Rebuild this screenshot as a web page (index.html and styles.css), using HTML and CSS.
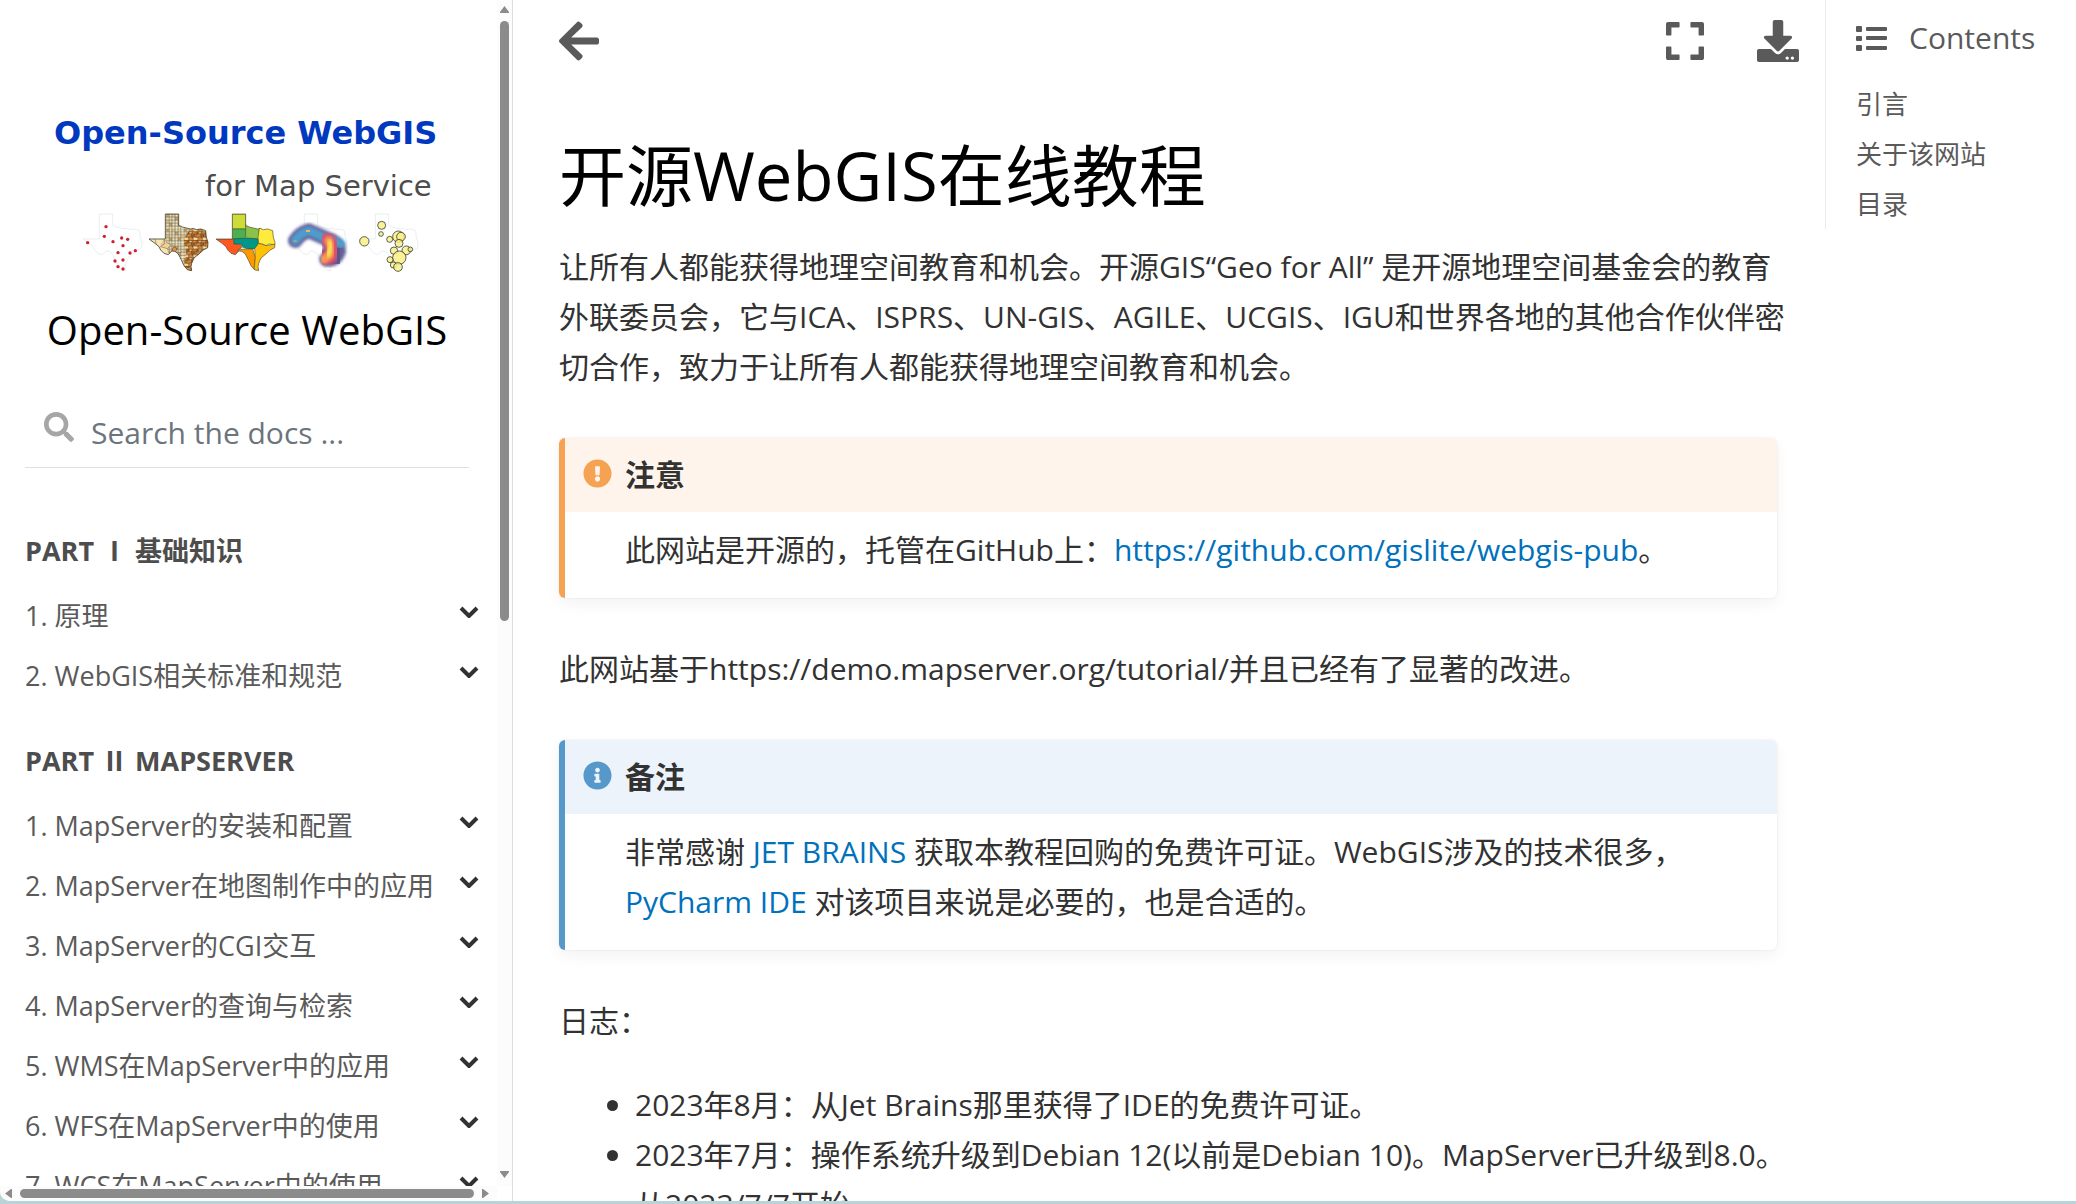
FILE: index.html
```
<!DOCTYPE html>
<html lang="zh-CN">
<head>
  <meta charset="UTF-8">
  <meta name="viewport" content="width=device-width, initial-scale=1.0">
  <title>开源WebGIS在线教程</title>
  <link rel="stylesheet" href="styles.css">
</head>
<body>
<div class="page">

  <!-- Sidebar -->
  <aside class="sidebar">
    <div class="sidebar-content">
      <a class="logo" href="#">
        <svg viewBox="0 0 400 160" width="400" height="160" role="img" aria-label="Open-Source WebGIS for Map Service">
          <defs>
            <path id="texas" d="M49 0H89V34L100 39L112 42L125 45L133 43L142 47L155 45L170 50L172 70L177 85L176 101L163 108L150 120L135 132L128 148L126 158L128 170L115 167L105 155L98 140L88 120L78 112L68 111L58 122L45 118L35 108L30 98L18 88L0 75H49Z"/>
            <clipPath id="texasClip"><use href="#texas"/></clipPath>
            <pattern id="counties" width="52" height="44" patternUnits="userSpaceOnUse">
              <rect width="52" height="44" fill="#f3ecc9"/>
              <path d="M0 0h8v9H0zM26 9h9v9h-9zM35 27h8v9h-8zM9 27h8v9H9z" fill="#e7a556"/>
              <path d="M17 0h9v9h-9zM43 18h9v9h-9zM0 18h9v9H0z" fill="#f5d08f"/>
              <path d="M0 0H52M0 9H52M0 18H52M0 27H52M0 36H52M0 0V44M9 0V44M17 0V44M26 0V44M35 0V44M43 0V44" stroke="#4a4434" stroke-width="1.6" fill="none"/>
            </pattern>
            <pattern id="countiesEast" width="28" height="26" patternUnits="userSpaceOnUse">
              <rect width="28" height="26" fill="#d98a3d"/>
              <path d="M0 0l7 2 1 6-8 2zM15 10l8-1 2 7-7 3z" fill="#b5601c"/>
              <path d="M11 1l7 1-2 6-7-1zM21 18l7 1v7l-8-1zM0 18l7 0 1 7H0z" fill="#f6dca0"/>
              <path d="M0 0l7 2 4-1 7 1 10-2M7 2l1 6-8 2M18 2l-2 6 7 1 5-1M8 8l8 0-1 2 3 9 7-3 3 2M0 18l7 0 7-2 4 3 3 6M7 18l1 8M0 10v8M23 9l2 7" stroke="#3d2c18" stroke-width="1.7" fill="none"/>
            </pattern>
            <filter id="soft" x="-30%" y="-30%" width="160%" height="160%"><feGaussianBlur stdDeviation="4"/></filter>
            <filter id="softer" x="-30%" y="-30%" width="160%" height="160%"><feGaussianBlur stdDeviation="6"/></filter>
          </defs>
          <text class="logo-name" x="7" y="32">Open-Source WebGIS</text>
          <text class="logo-sub" x="158" y="84">for Map Service</text>

          <!-- points -->
          <g transform="translate(36 102) scale(.3333)">
            <use href="#texas" fill="#fff" stroke="#e3eaee" stroke-width="2.5"/>
            <g fill="#cf2030">
              <circle cx="69" cy="38" r="5"/><circle cx="64" cy="67" r="5"/><circle cx="14" cy="86" r="5"/>
              <circle cx="90" cy="83" r="5"/><circle cx="116" cy="72" r="5"/><circle cx="134" cy="76" r="5"/>
              <circle cx="120" cy="95" r="5"/><circle cx="105" cy="116" r="5"/><circle cx="157" cy="110" r="5"/>
              <circle cx="141" cy="117" r="5"/><circle cx="96" cy="141" r="5"/><circle cx="120" cy="138" r="5"/>
              <circle cx="105" cy="158" r="5"/><circle cx="120" cy="165" r="5"/>
            </g>
          </g>

          <!-- counties -->
          <g transform="translate(102 102) scale(.3333)">
            <g clip-path="url(#texasClip)">
              <rect width="180" height="172" fill="url(#counties)"/>
              <path d="M120 50L180 36V130L128 172H100L112 120L104 76Z" fill="url(#countiesEast)"/>
              <path d="M0 75H46L34 92L52 100L60 122H38L0 80Z" fill="#f8e3b4"/>
              <path d="M46 75V90L34 98M18 75L22 92M34 98L56 104L66 92L50 84" fill="#f4cf93" stroke="#6b6047" stroke-width="1.6"/>
              <path d="M68 112L74 98L84 104L80 114ZM104 158L126 162V170H112Z" fill="#e9943c" stroke="#4a3820" stroke-width="1.6"/>
            </g>
            <use href="#texas" fill="none" stroke="#4b4636" stroke-width="2.5"/>
          </g>

          <!-- regions -->
          <g transform="translate(169 102) scale(.3333)" stroke="#3c4a2a" stroke-width="1.6">
            <g clip-path="url(#texasClip)">
              <path d="M49 0H89V45H49Z" fill="#cddc39"/>
              <path d="M49 45H89V75H49Z" fill="#4caf50"/>
              <path d="M89 30L134 40L128 50L130 74H96L89 66Z" fill="#8bc34a"/>
              <path d="M130 42H180V92L158 90L150 95L140 90L128 88L126 72Z" fill="#ffeb3b"/>
              <path d="M52 75L96 72L126 75L127 92L118 104L98 106L80 100L76 90L54 92Z" fill="#009688"/>
              <path d="M0 75H53V90L76 92V102L68 106L60 125H30Z" fill="#ff5722"/>
              <path d="M66 106L110 105L118 130L114 172H98L70 120Z" fill="#ff9800"/>
              <path d="M116 104L128 88L150 95L180 90V110L130 172H114L118 130Z" fill="#ffc107"/>
            </g>
            <use href="#texas" fill="none" stroke="#55482c" stroke-width="2"/>
          </g>

          <!-- heat map -->
          <g transform="translate(241 102) scale(.3333)">
            <use href="#texas" fill="#fff" stroke="#e3eaee" stroke-width="2.5"/>
            <g fill="none" stroke-linecap="round" stroke-linejoin="round">
              <path d="M22 80Q36 58 62 50Q90 62 120 76Q150 88 152 112Q142 138 116 136" stroke="#65609a" stroke-width="44" filter="url(#soft)"/>
              <path d="M134 90Q150 106 142 124Q128 136 112 134" stroke="#5a528f" stroke-width="60" filter="url(#soft)"/>
              <path d="M22 80Q36 58 62 50Q90 62 120 76Q140 78 158 90" stroke="#4f9bcb" stroke-width="27" filter="url(#soft)"/>
              <path d="M116 76Q138 92 138 112Q130 132 112 134" stroke="#e0506a" stroke-width="42" filter="url(#softer)"/>
              <path d="M122 80Q134 102 128 116Q122 128 108 136" stroke="#f79a52" stroke-width="25" filter="url(#soft)"/>
              <path d="M126 86Q130 106 120 122" stroke="#fbe24e" stroke-width="15" filter="url(#soft)"/>
              <path d="M56 52L62 49" stroke="#f0b868" stroke-width="19" filter="url(#soft)"/>
              <path d="M19 82L24 80" stroke="#bfa678" stroke-width="11" filter="url(#soft)"/>
            </g>
          </g>

          <!-- proportional circles -->
          <g transform="translate(312 102) scale(.3333)">
            <use href="#texas" fill="#fff" stroke="#e3eaee" stroke-width="2.5"/>
            <g fill="#faee85" fill-opacity=".85" stroke="#37413f" stroke-width="2.5">
              <circle cx="68" cy="34" r="12"/><circle cx="66" cy="60" r="7"/><circle cx="16" cy="82" r="14"/>
              <circle cx="118" cy="68" r="17"/><circle cx="126" cy="68" r="13"/><circle cx="92" cy="76" r="9"/>
              <circle cx="120" cy="88" r="12"/><circle cx="105" cy="110" r="11"/><circle cx="142" cy="109" r="13"/>
              <circle cx="154" cy="106" r="7"/><circle cx="121" cy="131" r="20"/><circle cx="93" cy="137" r="9"/>
              <circle cx="103" cy="153" r="9"/><circle cx="117" cy="159" r="13"/>
            </g>
          </g>
        </svg>
      </a>
      <p class="site-name">Open-Source WebGIS</p>

      <form class="search">
        <svg class="search-icon" viewBox="0 0 512 512" aria-hidden="true"><path d="M505 442.7L405.300 343c-4.500-4.500-10.600-7-17-7H372c27.600-35.300 44-79.700 44-128C416 93.100 322.900 0 208 0S0 93.100 0 208s93.100 208 208 208c48.300 0 92.700-16.400 128-44v16.300c0 6.400 2.500 12.500 7 17l99.700 99.700c9.400 9.400 24.600 9.400 33.900 0l28.300-28.300c9.400-9.400 9.400-24.600.1-34zM208 336c-70.700 0-128-57.200-128-128 0-70.700 57.200-128 128-128 70.700 0 128 57.200 128 128 0 70.700-57.200 128-128 128z"/></svg>
        <input type="search" placeholder="Search the docs ..." aria-label="Search the docs">
      </form>

      <nav class="docs-nav">
        <p class="caption">Part Ⅰ 基础知识</p>
        <ul>
          <li><a href="#">1. 原理</a><button class="toggle" aria-label="展开"><svg viewBox="0 0 20 12"><path d="M2 2l8 8 8-8"/></svg></button></li>
          <li><a href="#">2. WebGIS相关标准和规范</a><button class="toggle" aria-label="展开"><svg viewBox="0 0 20 12"><path d="M2 2l8 8 8-8"/></svg></button></li>
        </ul>
        <p class="caption">Part Ⅱ MapServer</p>
        <ul>
          <li><a href="#">1. MapServer的安装和配置</a><button class="toggle" aria-label="展开"><svg viewBox="0 0 20 12"><path d="M2 2l8 8 8-8"/></svg></button></li>
          <li><a href="#">2. MapServer在地图制作中的应用</a><button class="toggle" aria-label="展开"><svg viewBox="0 0 20 12"><path d="M2 2l8 8 8-8"/></svg></button></li>
          <li><a href="#">3. MapServer的CGI交互</a><button class="toggle" aria-label="展开"><svg viewBox="0 0 20 12"><path d="M2 2l8 8 8-8"/></svg></button></li>
          <li><a href="#">4. MapServer的查询与检索</a><button class="toggle" aria-label="展开"><svg viewBox="0 0 20 12"><path d="M2 2l8 8 8-8"/></svg></button></li>
          <li><a href="#">5. WMS在MapServer中的应用</a><button class="toggle" aria-label="展开"><svg viewBox="0 0 20 12"><path d="M2 2l8 8 8-8"/></svg></button></li>
          <li><a href="#">6. WFS在MapServer中的使用</a><button class="toggle" aria-label="展开"><svg viewBox="0 0 20 12"><path d="M2 2l8 8 8-8"/></svg></button></li>
          <li><a href="#">7. WCS在MapServer中的使用</a><button class="toggle" aria-label="展开"><svg viewBox="0 0 20 12"><path d="M2 2l8 8 8-8"/></svg></button></li>
        </ul>
      </nav>
    </div>

    <div class="scroll-y">
      <svg viewBox="0 0 9 7"><path d="M4.500 0L9 6V7H0V6z"/></svg>
      <div class="track"><div class="thumb"></div></div>
      <svg viewBox="0 0 9 7"><path d="M4.500 7L9 1V0H0V1z"/></svg>
    </div>
    <div class="scroll-x">
      <svg viewBox="0 0 7 9"><path d="M0 4.500L6 0H7V9H6z"/></svg>
      <div class="thumb"></div>
      <svg viewBox="0 0 7 9"><path d="M7 4.500L1 0H0V9H1z"/></svg>
    </div>
  </aside>

  <!-- Main content -->
  <main class="main">
    <header class="topbar">
      <button class="icon-btn" aria-label="Toggle navigation">
        <svg viewBox="0 0 448 512" width="40" height="46"><path d="M257.500 445.100l-22.200 22.200c-9.400 9.400-24.600 9.400-33.900 0L7 273c-9.400-9.400-9.400-24.600 0-33.900L201.400 44.700c9.400-9.400 24.600-9.400 33.900 0l22.200 22.200c9.500 9.500 9.300 25-.4 34.300L136.600 216H424c13.300 0 24 10.700 24 24v32c0 13.300-10.700 24-24 24H136.600l120.500 114.800c9.800 9.300 10 24.800.4 34.300z"/></svg>
      </button>
      <div class="topbar-right">
        <button class="icon-btn" aria-label="Fullscreen mode">
          <svg viewBox="0 32 448 448" width="38" height="38"><path d="M0 180V56c0-13.300 10.700-24 24-24h124c6.600 0 12 5.400 12 12v40c0 6.600-5.400 12-12 12H64v84c0 6.600-5.400 12-12 12H12c-6.600 0-12-5.400-12-12zM288 44v40c0 6.600 5.400 12 12 12h84v84c0 6.600 5.400 12 12 12h40c6.600 0 12-5.400 12-12V56c0-13.300-10.700-24-24-24H300c-6.600 0-12 5.400-12 12zm148 276h-40c-6.600 0-12 5.400-12 12v84h-84c-6.600 0-12 5.400-12 12v40c0 6.600 5.400 12 12 12h124c13.300 0 24-10.700 24-24V332c0-6.600-5.400-12-12-12zM160 468v-40c0-6.600-5.400-12-12-12H64v-84c0-6.600-5.400-12-12-12H12c-6.600 0-12 5.400-12 12v124c0 13.300 10.700 24 24 24h124c6.600 0 12-5.400 12-12z"/></svg>
        </button>
        <button class="icon-btn" aria-label="Download this page">
          <svg viewBox="0 0 512 512" width="42" height="42"><path d="M216 0h80c13.300 0 24 10.700 24 24v168h87.700c17.800 0 26.700 21.500 14.100 34.100L269.700 378.300c-7.500 7.500-19.800 7.500-27.300 0L90.100 226.100c-12.600-12.600-3.700-34.100 14.100-34.100H192V24c0-13.300 10.700-24 24-24zm296 376v112c0 13.300-10.700 24-24 24H24c-13.300 0-24-10.700-24-24V376c0-13.300 10.700-24 24-24h146.700l49 49c20.100 20.100 52.500 20.100 72.600 0l49-49H488c13.300 0 24 10.700 24 24zm-124 88c0-11-9-20-20-20s-20 9-20 20 9 20 20 20 20-9 20-20zm64 0c0-11-9-20-20-20s-20 9-20 20 9 20 20 20 20-9 20-20z"/></svg>
        </button>
      </div>
    </header>

    <article>
      <h1>开源WebGIS在线教程</h1>
      <p>让所有人都能获得地理空间教育和机会。开源GIS“Geo for All” 是开源地理空间基金会的教育外联委员会，它与ICA、ISPRS、UN-GIS、AGILE、UCGIS、IGU和世界各地的其他合作伙伴密切合作，致力于让所有人都能获得地理空间教育和机会。</p>

      <div class="admonition attention">
        <p class="admonition-title">
          <svg viewBox="0 0 512 512" aria-hidden="true"><path d="M504 256c0 137-111 248-248 248S8 393 8 256 119 8 256 8s248 111 248 248zm-248 50c-25.400 0-46 20.600-46 46s20.600 46 46 46 46-20.600 46-46-20.600-46-46-46zm-43.700-165.300l7.400 136c.3 6.400 5.600 11.300 12 11.300h48.500c6.400 0 11.600-5 12-11.300l7.400-136c.4-6.900-5.100-12.700-12-12.700h-63.400c-6.900 0-12.300 5.800-11.900 12.700z"/></svg>
          注意
        </p>
        <p>此网站是开源的，托管在GitHub上：<a href="#">https://github.com/gislite/webgis-pub</a>。</p>
      </div>

      <p>此网站基于https://demo.mapserver.org/tutorial/并且已经有了显著的改进。</p>

      <div class="admonition note">
        <p class="admonition-title">
          <svg viewBox="0 0 512 512" aria-hidden="true"><path d="M256 8C119 8 8 119 8 256s111 248 248 248 248-111 248-248S393 8 256 8zm0 110c23.200 0 42 18.800 42 42s-18.800 42-42 42-42-18.800-42-42 18.800-42 42-42zm56 254c0 6.600-5.400 12-12 12h-88c-6.600 0-12-5.400-12-12v-24c0-6.600 5.400-12 12-12h12v-64h-12c-6.600 0-12-5.400-12-12v-24c0-6.600 5.400-12 12-12h64c6.600 0 12 5.400 12 12v100h12c6.600 0 12 5.400 12 12v24z"/></svg>
          备注
        </p>
        <p>非常感谢 <a href="#">JET BRAINS</a> 获取本教程回购的免费许可证。WebGIS涉及的技术很多， <a href="#">PyCharm IDE</a> 对该项目来说是必要的，也是合适的。</p>
      </div>

      <p>日志：</p>
      <ul class="log">
        <li>2023年8月：从Jet Brains那里获得了IDE的免费许可证。</li>
        <li>2023年7月：操作系统升级到Debian 12(以前是Debian 10)。MapServer已升级到8.0。从2023/7/7开始。</li>
      </ul>
    </article>
  </main>

  <!-- Page contents -->
  <aside class="toc">
    <div class="toc-title">
      <svg viewBox="0 0 31 25" aria-hidden="true"><path d="M1 0h4a1 1 0 0 1 1 1v4a1 1 0 0 1-1 1H1a1 1 0 0 1-1-1V1a1 1 0 0 1 1-1zM1 10h4a1 1 0 0 1 1 1v3a1 1 0 0 1-1 1H1a1 1 0 0 1-1-1v-3a1 1 0 0 1 1-1zM1 19h4a1 1 0 0 1 1 1v4a1 1 0 0 1-1 1H1a1 1 0 0 1-1-1v-4a1 1 0 0 1 1-1zM11 1h19a1 1 0 0 1 1 1v2a1 1 0 0 1-1 1H11a1 1 0 0 1-1-1V2a1 1 0 0 1 1-1zM11 10h19a1 1 0 0 1 1 1v2a1 1 0 0 1-1 1H11a1 1 0 0 1-1-1v-2a1 1 0 0 1 1-1zM11 20h19a1 1 0 0 1 1 1v2a1 1 0 0 1-1 1H11a1 1 0 0 1-1-1v-2a1 1 0 0 1 1-1z"/></svg>
      Contents
    </div>
    <nav>
      <a href="#">引言</a>
      <a href="#">关于该网站</a>
      <a href="#">目录</a>
    </nav>
  </aside>

</div>
</body>
</html>
```

FILE: styles.css
```
* {
  box-sizing: border-box;
}

body {
  margin: 0;
  background-color: #b9d3d7;
  color: #323232;
  font-family: "Open Sans", "Noto Sans CJK SC", sans-serif;
  font-size: 30px;
  line-height: 50px;
}

p, ul, h1 {
  margin: 0;
  padding: 0;
}

a {
  color: #0071bc;
  text-decoration: none;
}

button {
  padding: 0;
  border: none;
  background: none;
  cursor: pointer;
}

svg {
  display: block;
}

.page {
  display: flex;
  height: calc(100vh - 3px);
  background-color: #fff;
  border-bottom-left-radius: 10px;
  overflow: hidden;
}

/* Sidebar */
.sidebar {
  flex: 0 0 513px;
  display: grid;
  grid-template-columns: minmax(0, 1fr) 15px;
  grid-template-rows: minmax(0, 1fr) 15px;
  border-right: 1px solid #dcdcdc;
}

.sidebar-content {
  overflow: hidden;
  padding: 112px 28px 0 25px;
}

.logo svg {
  margin: 0 auto;
}

.logo-name {
  font: bold 32px "DejaVu Sans", sans-serif;
  fill: #0039bf;
}

.logo-sub {
  font: 29px "DejaVu Sans", sans-serif;
  fill: #4d4d4d;
}

.site-name {
  margin-top: 33px;
  color: #000;
  font-size: 40px;
  text-align: center;
}

.search {
  display: flex;
  align-items: center;
  gap: 17px;
  margin-top: 50px;
  padding: 0 0 8px 19px;
  border-bottom: 1px solid #dfe0e2;
}

.search-icon {
  width: 30px;
  height: 30px;
  margin-bottom: 10px;
  fill: #a4a6a7;
}

.search input {
  flex: 1;
  min-width: 0;
  height: 54px;
  padding: 0;
  border: none;
  outline: none;
  background: none;
  font: inherit;
}

.search input::placeholder {
  color: #6c757d;
  opacity: 1;
}

.docs-nav {
  margin-right: -14px;
  font-size: 27px;
}

.caption {
  color: #4d4d4d;
  font-weight: 700;
  text-transform: uppercase;
  margin-top: 58px;
  margin-bottom: 10px;
}

.docs-nav ul {
  list-style: none;
}

.docs-nav li {
  display: flex;
  justify-content: space-between;
  align-items: center;
  height: 60px;
  white-space: nowrap;
}

.docs-nav li a {
  color: #5a5a5a;
}

.docs-nav ul + .caption {
  margin-top: 30px;
}

.toggle svg {
  width: 20px;
  height: 12px;
  margin: 0 4px 8px 0;
  fill: none;
  stroke: #323232;
  stroke-width: 4;
}

/* Scroll bars of the sidebar */
.scroll-y, .scroll-x {
  display: flex;
  align-items: center;
  background-color: #fcfcfc;
}

.scroll-y {
  flex-direction: column;
  padding: 6px 0 8px;
  gap: 8px;
}

.scroll-x {
  padding: 0 8px 0 5px;
  gap: 8px;
}

.scroll-y svg {
  width: 9px;
  height: 7px;
  fill: #8b8b8b;
}

.scroll-x svg {
  width: 7px;
  height: 9px;
  fill: #8b8b8b;
}

.track {
  flex: 1;
}

.thumb {
  border-radius: 5px;
  background-color: #8b8b8b;
}

.track .thumb {
  width: 9px;
  height: 52.5%;
}

.scroll-x .thumb {
  flex: 1;
  height: 9px;
}

/* Main */
.main {
  flex: 1;
  min-width: 0;
  padding: 0 26px 0 46px;
}

.topbar {
  display: flex;
  justify-content: space-between;
  align-items: center;
  height: 82px;
}

.topbar-right {
  display: flex;
  align-items: center;
  gap: 53px;
}

.icon-btn {
  fill: #5a5a5a;
}

article {
  padding-right: 5px;
}

h1 {
  margin: 54px 0 28px;
  color: #000;
  font-size: 67px;
  font-weight: 400;
  line-height: 78px;
}

.admonition {
  margin: 46px 17px 46px 0;
  border-left: 6px solid #f5a252;
  border-radius: 6px;
  padding: 0 60px 23px 60px;
  box-shadow: 0 6px 15px rgba(0, 0, 0, 0.05), 0 0 2px rgba(0, 0, 0, 0.1);
}

.admonition-title {
  display: flex;
  align-items: center;
  gap: 13px;
  margin: 0 -60px 13px;
  padding: 12px 18px;
  border-radius: 0 6px 0 0;
  background-color: #fef4eb;
  font-weight: 700;
}

.admonition-title svg {
  width: 29px;
  height: 29px;
  margin-bottom: 3px;
  fill: #f5a252;
}

.note {
  border-left-color: #5798ca;
}

.note .admonition-title {
  background-color: #ecf3fa;
}

.note .admonition-title svg {
  fill: #5798ca;
}

.log {
  margin-top: 34px;
  padding-left: 76px;
}

/* Contents on the right */
.toc {
  flex: 0 0 251px;
  align-self: flex-start;
  padding: 13px 0 0 30px;
  border-left: 1px solid #eaeaea;
  color: #5a5a5a;
}

.toc-title {
  display: flex;
  align-items: center;
  gap: 22px;
}

.toc-title svg {
  width: 31px;
  height: 25px;
  fill: #5a5a5a;
}

.toc nav {
  display: flex;
  flex-direction: column;
  margin-top: 16px;
  font-size: 26px;
}

.toc a {
  color: #5a5a5a;
}
```
